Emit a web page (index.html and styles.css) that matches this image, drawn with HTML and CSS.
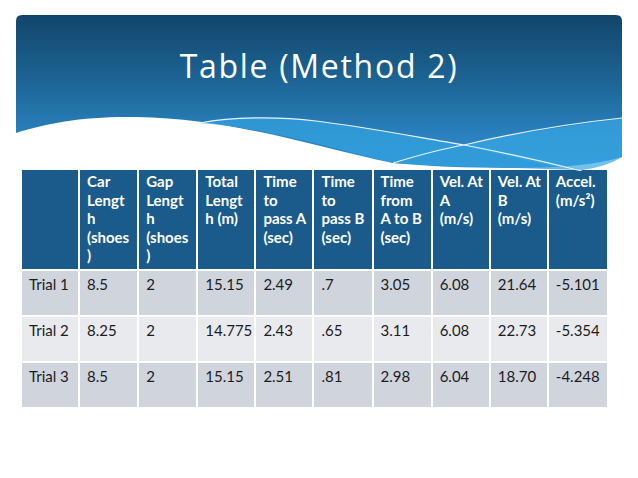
FILE: index.html
```html
<!DOCTYPE html>
<html>
<head>
<meta charset="utf-8">
<link rel="stylesheet" href="styles.css">
</head>
<body>
<div class="slide">
  <header class="banner">
    <svg class="banner-art" width="606" height="156" viewBox="0 0 606 156" aria-hidden="true">
      <defs>
        <linearGradient id="bg" x1="0" y1="0" x2="0" y2="1">
          <stop offset="0" stop-color="#12456a"/>
          <stop offset="0.45" stop-color="#1d6697"/>
          <stop offset="0.8" stop-color="#2a82bf"/>
          <stop offset="1" stop-color="#2f90cf"/>
        </linearGradient>
      </defs>
      <path d="M0 6 Q0 0 6 0 H600 Q606 0 606 6 V142 Q570 153 500 153 Q430 153 377 148 C300 132 220 104 120 102 C70 101 30 108 0 118 Z" fill="url(#bg)"/>
      <path d="M184 108 C215 102 260 101 300 106 C350 112 400 122 448 130 C490 138 530 147 566 155 Q520 154 470 152 Q420 151 377 148 C320 134 250 113 184 108 Z" fill="#33a0de" opacity="0.75"/>
      <path d="M448 130 C500 145 540 152 566 155 Q590 152 606 142 V103 C560 110 500 118 448 130 Z" fill="#38a6e4" opacity="0.7"/>
      <path d="M184 108 C215 102 260 101 300 106 C350 112 400 122 448 130 C490 138 530 147 566 156" fill="none" stroke="#e8f4fb" stroke-width="1.2"/>
      <path d="M377 148 C400 141 425 134 448 130 C490 120 540 110 606 103" fill="none" stroke="#e8f4fb" stroke-width="1.2"/>
    </svg>
    <h1 class="title">Table (Method 2)</h1>
  </header>

  <table class="data">
    <colgroup>
      <col class="c57"><col class="c59"><col class="c59"><col class="c58"><col class="c58">
      <col class="c59"><col class="c59"><col class="c58"><col class="c58"><col class="c59">
    </colgroup>
    <thead>
      <tr>
        <th></th>
        <th>Car<br>Lengt<br>h<br>(shoes<br>)</th>
        <th>Gap<br>Lengt<br>h<br>(shoes<br>)</th>
        <th>Total<br>Lengt<br>h (m)</th>
        <th>Time<br>to<br>pass A<br>(sec)</th>
        <th>Time<br>to<br>pass B<br>(sec)</th>
        <th>Time<br>from<br>A to B<br>(sec)</th>
        <th>Vel. At<br>A<br>(m/s)</th>
        <th>Vel. At<br>B<br>(m/s)</th>
        <th>Accel.<br>(m/s²)</th>
      </tr>
    </thead>
    <tbody>
      <tr class="odd">
        <td>Trial 1</td><td>8.5</td><td>2</td><td>15.15</td><td>2.49</td><td>.7</td><td>3.05</td><td>6.08</td><td>21.64</td><td>-5.101</td>
      </tr>
      <tr class="even">
        <td>Trial 2</td><td>8.25</td><td>2</td><td>14.775</td><td>2.43</td><td>.65</td><td>3.11</td><td>6.08</td><td>22.73</td><td>-5.354</td>
      </tr>
      <tr class="odd">
        <td>Trial 3</td><td>8.5</td><td>2</td><td>15.15</td><td>2.51</td><td>.81</td><td>2.98</td><td>6.04</td><td>18.70</td><td>-4.248</td>
      </tr>
    </tbody>
  </table>
</div>
</body>
</html>
```
FILE: styles.css
```css
html, body {
  margin: 0;
  padding: 0;
  background: #ffffff;
}

.slide {
  width: 638px;
  height: 478px;
  padding-top: 15px;
  box-sizing: border-box;
}

.banner {
  position: relative;
  margin-left: 16px;
  width: 606px;
  height: 155px;
}

.banner-art {
  position: absolute;
  left: 0;
  top: 0;
  display: block;
}

.title {
  position: relative;
  margin: 0;
  padding-top: 31px;
  text-align: center;
  font-family: "Open Sans", "DejaVu Sans", sans-serif;
  font-weight: 400;
  font-size: 32px;
  letter-spacing: 1.7px;
  line-height: 40px;
  color: #ffffff;
}

.data {
  margin-left: 22px;
  width: 585px;
  table-layout: fixed;
  border-collapse: collapse;
  font-family: Lato, "Open Sans", sans-serif;
  font-size: 15px;
}

.c57 { width: 57px; }
.c58 { width: 58px; }
.c59 { width: 59px; }

.data th,
.data td {
  border: 2px solid #ffffff;
  text-align: left;
  vertical-align: top;
  white-space: nowrap;
  overflow: hidden;
}

.data th {
  background: #1a5b8b;
  color: #ffffff;
  font-weight: 700;
  height: 100px;
  line-height: 18.5px;
  padding: 2px 4px 0 7px;
  box-sizing: border-box;
}

.data td {
  color: #1c1c1c;
  height: 46px;
  line-height: 20px;
  padding: 3px 4px 0 7px;
  box-sizing: border-box;
}

.data tr.odd td { background: #cfd4dd; }
.data tr.even td { background: #e8eaee; }

.data thead tr th { border-top: 0; }
.data tr th:first-child,
.data tr td:first-child { border-left: 0; }
.data tr th:last-child,
.data tr td:last-child { border-right: 0; }
```
